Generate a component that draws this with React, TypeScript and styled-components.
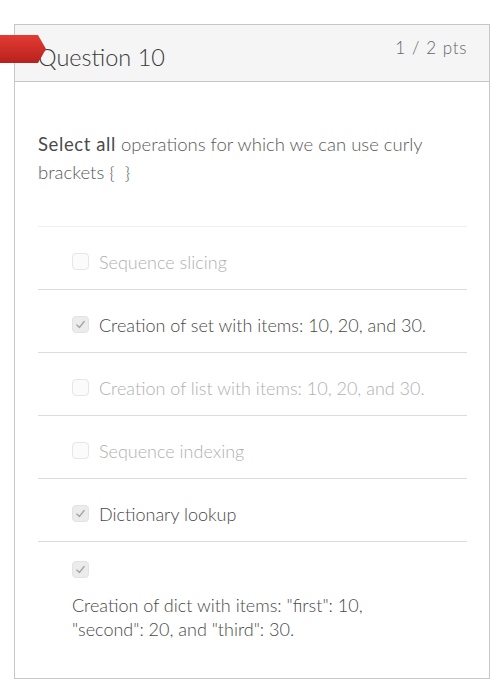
import React from 'react'
import styled, { createGlobalStyle } from 'styled-components'

const GlobalStyle = createGlobalStyle`
  html, body {
    margin: 0;
    padding: 0;
    background: #ffffff;
    font-family: Lato, 'Noto Sans', sans-serif;
  }
`
const Page = styled.div`
  padding: 24px 2px 0 14px;
`
const Card = styled.div`
  position: relative;
  width: 476px;
  height: 655px;
  box-sizing: border-box;
  border: 1px solid #c4c8cb;
`
const Flag = styled.svg`
  position: absolute;
  left: -15px;
  top: 9px;
`
const Header = styled.div`
  display: flex;
  justify-content: space-between;
  align-items: flex-start;
  height: 56px;
  padding: 0 22px 0 23px;
  background: #f5f5f5;
  border-bottom: 1px solid #c4c8cb;
`
const Title = styled.div`
  padding-top: 17px;
  font-size: 23.5px;
  font-weight: 300;
  line-height: 30px;
  color: #3a3a3a;
`
const Points = styled.div`
  padding-top: 13px;
  font-size: 17px;
  font-weight: 300;
  letter-spacing: 0.6px;
  word-spacing: 1px;
  line-height: 20px;
  color: #666666;
`
const Body = styled.div`
  padding: 48px 22px 0 23px;
`
const Prompt = styled.div`
  font-size: 18.5px;
  font-weight: 300;
  line-height: 28px;
  color: #595959;
  margin-bottom: 40px;

  strong {
    font-weight: 400;
    letter-spacing: 0.6px;
    color: #4a4a4a;
  }
`
const AnswerList = styled.div`
  display: flex;
  flex-direction: column;
`
const Answer = styled.div<{ $stacked?: boolean; $first?: boolean }>`
  display: flex;
  flex-direction: ${({ $stacked }) => ($stacked ? 'column' : 'row')};
  align-items: ${({ $stacked }) => ($stacked ? 'flex-start' : 'center')};
  gap: ${({ $stacked }) => ($stacked ? '15px' : '10px')};
  min-height: 63px;
  padding: ${({ $stacked }) => ($stacked ? '19px 34px 0' : '7px 34px 0')};
  box-sizing: border-box;
  border-top: 1px solid ${({ $first }) => ($first ? '#efefef' : '#dcdcdc')};
`
const Box = styled.span<{ $checked: boolean }>`
  display: inline-flex;
  align-items: center;
  justify-content: center;
  flex: none;
  width: 15px;
  height: 15px;
  border-radius: 4px;
  border: 1px solid ${({ $checked }) => ($checked ? '#e2e2e2' : '#e6e6e6')};
  background: ${({ $checked }) => ($checked ? '#ececec' : '#fbfbfb')};
`
const Label = styled.span<{ $checked: boolean }>`
  font-size: 18px;
  font-weight: 300;
  line-height: 24px;
  color: ${({ $checked }) => ($checked ? '#484848' : '#b0b0b0')};
`

const answers = [
  { text: 'Sequence slicing', checked: false },
  { text: 'Creation of set with items: 10, 20, and 30.', checked: true },
  { text: 'Creation of list with items: 10, 20, and 30.', checked: false },
  { text: 'Sequence indexing', checked: false },
  { text: 'Dictionary lookup', checked: true },
]

function CheckBox({ checked }: { checked: boolean }) {
  return (
    <Box $checked={checked}>
      {checked && (
        <svg width="11" height="11" viewBox="0 0 12 12">
          <path d="M2 6.5 L4.8 9.2 L10 2.8" fill="none" stroke="#a8a8a8" strokeWidth="1.6" strokeLinecap="round" strokeLinejoin="round" />
        </svg>
      )}
    </Box>
  )
}

export default function App() {
  return (
    <>
      <GlobalStyle />
      <Page>
        <Card>
          <Flag width="47" height="30" viewBox="0 0 47 30">
            <defs>
              <linearGradient id="flagFill" x1="0" y1="0" x2="0" y2="1">
                <stop offset="0" stopColor="#e33b33" />
                <stop offset="1" stopColor="#b8211d" />
              </linearGradient>
            </defs>
            <path d="M0 1 H38 L46 15 L38 29 H0 Z" fill="url(#flagFill)" />
          </Flag>
          <Header>
            <Title>Question 10</Title>
            <Points>1 / 2 pts</Points>
          </Header>
          <Body>
            <Prompt>
              <strong>Select all</strong> operations for which we can use curly brackets {'{\u00a0\u00a0}'}
            </Prompt>
            <AnswerList>
              {answers.map((a, i) => (
                <Answer key={a.text} $first={i === 0}>
                  <CheckBox checked={a.checked} />
                  <Label $checked={a.checked}>{a.text}</Label>
                </Answer>
              ))}
              <Answer $stacked>
                <CheckBox checked />
                <Label $checked>
                  Creation of dict with items: "first": 10,
                  <br />
                  "second": 20, and "third": 30.
                </Label>
              </Answer>
            </AnswerList>
          </Body>
        </Card>
      </Page>
    </>
  )
}
